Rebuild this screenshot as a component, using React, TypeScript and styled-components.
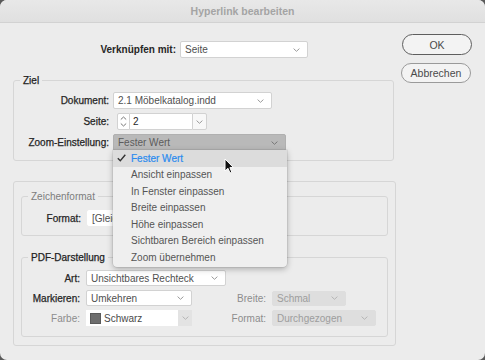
import React from 'react';
import styled, { createGlobalStyle } from 'styled-components';

const Global = createGlobalStyle`
  html, body { margin: 0; padding: 0; background: #5a5a5a; }
  body { font-family: "Liberation Sans", Arial, sans-serif; font-size: 10px; }
  #root { width: 485px; height: 360px; }
`;

const Window = styled.div`
  position: relative;
  width: 485px;
  height: 360px;
  background: #ececec;
  border-radius: 7px;
  overflow: hidden;
  display: flex;
  flex-direction: column;
`;

const TitleBar = styled.div`
  flex: none;
  height: 22px;
  display: flex;
  align-items: center;
  justify-content: center;
  background: linear-gradient(#e8e8e8, #e0e0e0);
  border-bottom: 1px solid #d2d2d2;
  color: #a4a4a4;
  font-weight: bold;
  font-size: 10.5px;
`;

const Body = styled.div`
  flex: 1;
  display: flex;
  gap: 6px;
  padding: 0 13px 0 13px;
`;

const Main = styled.div`
  width: 383px;
  flex: none;
  display: flex;
  flex-direction: column;
  padding-top: 18px;
`;

const Side = styled.div`
  flex: 1;
  display: flex;
  flex-direction: column;
  gap: 8px;
  padding-top: 11px;
`;

const PillButton = styled.button<{ $primary?: boolean }>`
  box-sizing: border-box;
  width: 70px;
  height: ${p => (p.$primary ? 21 : 20)}px;
  border-radius: 11px;
  border: ${p => (p.$primary ? '1.5px solid #5e5e5e' : '1px solid #9a9a9a')};
  background: #f3f3f3;
  color: #4a4a4a;
  font-family: "Liberation Sans", Arial, sans-serif;
  font-size: 10.5px;
  padding: 0;
  margin-left: ${p => (p.$primary ? 0 : -1)}px;
`;

const Row = styled.div<{ $gap?: number; $h?: number }>`
  display: flex;
  align-items: center;
  gap: ${p => p.$gap ?? 4}px;
  height: ${p => p.$h ?? 17}px;
`;

const Label = styled.span<{ $w: number; $tone?: 'strong' | 'dark' | 'muted' }>`
  flex: none;
  width: ${p => p.$w}px;
  text-align: right;
  white-space: nowrap;
  color: ${p => (p.$tone === 'muted' ? '#8c8c8c' : '#262626')};
  font-weight: ${p => (p.$tone === 'strong' ? 'bold' : 'normal')};
  -webkit-text-stroke: ${p => (p.$tone === 'dark' ? '0.25px #262626' : '0')};
`;

const SelectBox = styled.div<{ $w: number; $h?: number; $variant?: 'normal' | 'pressed' | 'disabled' | 'flat' }>`
  box-sizing: border-box;
  flex: none;
  width: ${p => p.$w}px;
  height: ${p => p.$h ?? 17}px;
  display: flex;
  align-items: center;
  justify-content: space-between;
  padding: 0 7px 0 4px;
  border-radius: 2px;
  white-space: nowrap;
  overflow: hidden;
  background: ${p =>
    p.$variant === 'pressed' ? '#b9b9b9' : p.$variant === 'disabled' ? '#dedede' : '#ffffff'};
  border: 1px solid
    ${p =>
      p.$variant === 'pressed'
        ? '#b0b0b0'
        : p.$variant === 'disabled'
        ? '#dedede'
        : p.$variant === 'flat'
        ? '#ffffff'
        : '#d2d2d2'};
  color: ${p => (p.$variant === 'disabled' ? '#9d9d9d' : p.$variant === 'pressed' ? '#5c5c5c' : '#505050')};
`;

const Chevron = ({ color = '#9a9a9a' }: { color?: string }) => (
  <svg width="7" height="4" viewBox="0 0 7 4" style={{ flex: 'none' }}>
    <path d="M0.6 0.6 L3.5 3.3 L6.4 0.6" stroke={color} strokeWidth="1" fill="none" />
  </svg>
);

const Group = styled.fieldset<{ $pb: number; $mt?: number; $mr?: number }>`
  margin: ${p => p.$mt ?? 0}px ${p => p.$mr ?? 0}px 0 0;
  padding: 0 0 ${p => p.$pb}px 0;
  border: 1px solid #d6d6d6;
  border-radius: 3px;
  min-width: 0;
`;

const Legend = styled.legend<{ $muted?: boolean }>`
  padding: 0 3px;
  margin-left: 6px;
  height: 13px;
  line-height: 13px;
  color: ${p => (p.$muted ? '#7d7d7d' : '#222')};
  -webkit-text-stroke: ${p => (p.$muted ? '0' : '0.25px #222')};
`;

const Stack = styled.div<{ $pt: number; $gap: number }>`
  display: flex;
  flex-direction: column;
  gap: ${p => p.$gap}px;
  padding-top: ${p => p.$pt}px;
`;

const Box = styled.div`
  margin-top: 20px;
  border: 1px solid #d6d6d6;
  border-radius: 3px;
  padding: 8px 7px 8px 7px;
  display: flex;
  flex-direction: column;
`;

const StepperWrap = styled.div`
  display: flex;
  height: 17px;
  margin-left: 4px;
`;

const StepperArrows = styled.div`
  box-sizing: border-box;
  width: 13px;
  height: 17px;
  background: #fff;
  border: 1px solid #d2d2d2;
  border-radius: 2px 0 0 2px;
  display: flex;
  align-items: center;
  justify-content: center;
`;

const StepperInput = styled.div`
  box-sizing: border-box;
  width: 62px;
  height: 17px;
  background: #fff;
  border-top: 1px solid #d2d2d2;
  border-bottom: 1px solid #d2d2d2;
  display: flex;
  align-items: center;
  padding-left: 3px;
  color: #1f1f1f;
`;

const StepperDrop = styled.div`
  box-sizing: border-box;
  width: 15px;
  height: 17px;
  background: #f8f8f8;
  border: 1px solid #d2d2d2;
  border-radius: 0 2px 2px 0;
  display: flex;
  align-items: center;
  justify-content: center;
`;

const ColorSelect = styled.div`
  display: flex;
  height: 16px;
  width: 106px;
  flex: none;
`;

const ColorMain = styled.div`
  box-sizing: border-box;
  flex: 1;
  background: #fff;
  display: flex;
  align-items: center;
  gap: 3px;
  padding-left: 4px;
  color: #4a4a4a;
`;

const Swatch = styled.span`
  width: 11px;
  height: 11px;
  box-sizing: border-box;
  background: #6e6e6e;
  border: 1px solid #5a5a5a;
`;

const ColorDrop = styled.div`
  width: 14px;
  background: #e3e3e3;
  display: flex;
  align-items: center;
  justify-content: center;
`;

const Menu = styled.div`
  position: absolute;
  left: 113px;
  top: 150px;
  width: 174px;
  padding-bottom: 1.5px;
  background: #efefef;
  border-radius: 0 0 4px 4px;
  box-shadow: 0 2px 6px rgba(0, 0, 0, 0.28), 0 0 0 0.5px rgba(0, 0, 0, 0.12);
  display: flex;
  flex-direction: column;
`;

const MenuItem = styled.div<{ $active?: boolean }>`
  height: 16.5px;
  display: flex;
  align-items: center;
  padding-left: 18px;
  position: relative;
  color: ${p => (p.$active ? '#2a8bef' : '#555')};
  background: ${p => (p.$active ? '#dcdcdc' : 'transparent')};
  -webkit-text-stroke: ${p => (p.$active ? '0.2px #2a8bef' : '0')};
  white-space: nowrap;
`;

const Check = styled.span`
  position: absolute;
  left: 4px;
  top: 4px;
  display: flex;
`;

const Cursor = styled.svg`
  position: absolute;
  left: 224px;
  top: 158px;
`;

const menuItems = [
  'Fester Wert',
  'Ansicht einpassen',
  'In Fenster einpassen',
  'Breite einpassen',
  'Höhe einpassen',
  'Sichtbaren Bereich einpassen',
  'Zoom übernehmen',
];

export default function App() {
  return (
    <>
      <Global />
      <Window>
        <TitleBar>Hyperlink bearbeiten</TitleBar>
        <Body>
          <Main>
            <Row>
              <Label $w={163} $tone="strong">Verknüpfen mit:</Label>
              <SelectBox $w={128}>
                <span>Seite</span>
                <Chevron />
              </SelectBox>
            </Row>

            <Group $pb={9} $mt={16} $mr={2}>
              <Legend>Ziel</Legend>
              <Stack $pt={5} $gap={4}>
                <Row>
                  <Label $w={95} $tone="dark">Dokument:</Label>
                  <SelectBox $w={159}>
                    <span>2.1 Möbelkatalog.indd</span>
                    <Chevron />
                  </SelectBox>
                </Row>
                <Row>
                  <Label $w={95} $tone="dark">Seite:</Label>
                  <StepperWrap>
                    <StepperArrows>
                      <svg width="7" height="11" viewBox="0 0 7 11">
                        <path d="M0.8 3.5 L3.5 1 L6.2 3.5" stroke="#777" strokeWidth="1" fill="none" />
                        <path d="M0.8 7.5 L3.5 10 L6.2 7.5" stroke="#777" strokeWidth="1" fill="none" />
                      </svg>
                    </StepperArrows>
                    <StepperInput>2</StepperInput>
                    <StepperDrop>
                      <Chevron />
                    </StepperDrop>
                  </StepperWrap>
                </Row>
                <Row>
                  <Label $w={95} $tone="dark">Zoom-Einstellung:</Label>
                  <SelectBox $w={173} $variant="pressed">
                    <span>Fester Wert</span>
                    <Chevron color="#777" />
                  </SelectBox>
                </Row>
              </Stack>
            </Group>

            <Box>
              <Group $pb={9}>
                <Legend $muted>Zeichenformat</Legend>
                <Stack $pt={7} $gap={0}>
                  <Row $gap={6} $h={16}>
                    <Label $w={59} $tone="dark">Format:</Label>
                    <SelectBox $w={193} $h={16} $variant="flat">
                      <span>[Gleiches Format]</span>
                      <Chevron />
                    </SelectBox>
                  </Row>
                </Stack>
              </Group>

              <Group $pb={10} $mt={15}>
                <Legend>PDF-Darstellung</Legend>
                <Stack $pt={6} $gap={4}>
                  <Row $gap={6} $h={16}>
                    <Label $w={58} $tone="dark">Art:</Label>
                    <SelectBox $w={140} $h={16}>
                      <span>Unsichtbares Rechteck</span>
                      <Chevron />
                    </SelectBox>
                  </Row>
                  <Row $gap={6} $h={16}>
                    <Label $w={58} $tone="dark">Markieren:</Label>
                    <SelectBox $w={106} $h={16}>
                      <span>Umkehren</span>
                      <Chevron />
                    </SelectBox>
                    <Label $w={68} $tone="muted">Breite:</Label>
                    <SelectBox $w={74} $h={15} $variant="disabled">
                      <span>Schmal</span>
                      <Chevron color="#b5b5b5" />
                    </SelectBox>
                  </Row>
                  <Row $gap={6} $h={16}>
                    <Label $w={58} $tone="muted">Farbe:</Label>
                    <ColorSelect>
                      <ColorMain>
                        <Swatch />
                        <span>Schwarz</span>
                      </ColorMain>
                      <ColorDrop>
                        <Chevron color="#b5b5b5" />
                      </ColorDrop>
                    </ColorSelect>
                    <Label $w={68} $tone="muted">Format:</Label>
                    <SelectBox $w={104} $h={16} $variant="disabled">
                      <span>Durchgezogen</span>
                      <Chevron color="#b5b5b5" />
                    </SelectBox>
                  </Row>
                </Stack>
              </Group>
            </Box>
          </Main>
          <Side>
            <PillButton $primary>OK</PillButton>
            <PillButton>Abbrechen</PillButton>
          </Side>
        </Body>

        <Menu>
          {menuItems.map((m, i) => (
            <MenuItem key={m} $active={i === 0}>
              {i === 0 && (
                <Check>
                  <svg width="9" height="8" viewBox="0 0 9 8">
                    <path d="M0.8 4.2 L3.3 6.8 L8.3 0.8" stroke="#333" strokeWidth="1.4" fill="none" />
                  </svg>
                </Check>
              )}
              {m}
            </MenuItem>
          ))}
        </Menu>

        <Cursor width="10" height="16" viewBox="0 0 10 16">
          <path d="M1 1 L1 13 L4 10.3 L6 15 L7.8 14.2 L5.9 9.6 L9.5 9.6 Z" fill="#111" stroke="#fff" strokeWidth="1" />
        </Cursor>
      </Window>
    </>
  );
}
